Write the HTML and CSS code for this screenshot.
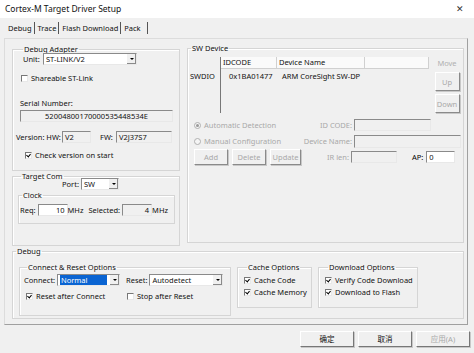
FILE: index.html
```
<!DOCTYPE html>
<html lang="en">
<head>
    <meta charset="UTF-8">
    <title>Cortex-M Target Driver Setup</title>
    <link rel="stylesheet" href="styles.css">
</head>
<body>
    <div class="titlebar">
        <span>Cortex-M Target Driver Setup</span>
        <span class="close">&#x2715;</span>
    </div>
    <div class="dialog">
        <div class="tabs">
            <span class="tab active">Debug</span>
            <span class="tab">Trace</span>
            <span class="tab">Flash Download</span>
            <span class="tab">Pack</span>
        </div>
        <div class="panel">
            <div class="top">
                <div class="left-col">
                    <fieldset class="group adapter">
                        <legend>Debug Adapter</legend>
                        <div class="row unit-row">
                            <span class="lbl">Unit:</span>
                            <div class="select w-unit"><span>ST-LINK/V2</span><i class="arrow"></i></div>
                        </div>
                        <label class="row check share-row"><span class="cb"></span>Shareable ST-Link</label>
                        <div class="row serial-lbl">Serial Number:</div>
                        <div class="box grey serial">52004800170000535448534E</div>
                        <div class="row version-row">
                            <span class="lbl">Version: HW:</span>
                            <div class="box grey hw">V2</div>
                            <span class="lbl fw-lbl">FW:</span>
                            <div class="box grey fw">V2J37S7</div>
                        </div>
                        <label class="row check ver-check"><span class="cb on"></span>Check version on start</label>
                    </fieldset>
                    <fieldset class="group target">
                        <legend>Target Com</legend>
                        <div class="row port-row">
                            <span class="lbl">Port:</span>
                            <div class="select w-port"><span>SW</span><i class="arrow"></i></div>
                        </div>
                        <fieldset class="group clock">
                            <legend>Clock</legend>
                            <div class="row req-row">
                                <span class="lbl">Req:</span>
                                <div class="box num req">10</div>
                                <span class="lbl unit-mhz">MHz</span>
                                <span class="lbl sel-lbl">Selected:</span>
                                <div class="box grey num sel">4</div>
                                <span class="lbl unit-mhz">MHz</span>
                            </div>
                        </fieldset>
                    </fieldset>
                </div>
                <fieldset class="group swdev">
                    <legend>SW Device</legend>
                    <div class="dev-top">
                        <span class="swdio">SWDIO</span>
                        <div class="devlist">
                            <div class="dev-head">
                                <span class="c1">IDCODE</span>
                                <span class="c2">Device Name</span>
                                <span class="c3"></span>
                            </div>
                            <div class="dev-row">
                                <span class="c1">0x1BA01477</span>
                                <span class="c2">ARM CoreSight SW-DP</span>
                            </div>
                        </div>
                        <div class="move-col">
                            <span class="move">Move</span>
                            <div class="btn off up">Up</div>
                            <div class="btn off down">Down</div>
                        </div>
                    </div>
                    <div class="row cfg-row">
                        <label class="radio-cell off"><span class="rb on"></span>Automatic Detection</label>
                        <span class="cfg-lbl off">ID CODE:</span>
                        <div class="box grey idcode"></div>
                    </div>
                    <div class="row cfg-row">
                        <label class="radio-cell off"><span class="rb"></span>Manual Configuration</label>
                        <span class="cfg-lbl off">Device Name:</span>
                        <div class="box grey devname"></div>
                    </div>
                    <div class="row cfg-row btn-row">
                        <div class="btn off add">Add</div>
                        <div class="btn off del">Delete</div>
                        <div class="btn off upd">Update</div>
                        <span class="cfg-lbl off irlen-lbl">IR len:</span>
                        <div class="box grey irlen"></div>
                        <span class="lbl ap-lbl">AP:</span>
                        <div class="box ap">0</div>
                    </div>
                </fieldset>
            </div>
            <fieldset class="group debug">
                <legend>Debug</legend>
                <div class="debug-row">
                    <fieldset class="group conn">
                        <legend>Connect &amp; Reset Options</legend>
                        <div class="row conn-row">
                            <span class="lbl">Connect:</span>
                            <div class="select w-conn"><span class="hl">Normal</span><i class="arrow"></i></div>
                            <span class="lbl reset-lbl">Reset:</span>
                            <div class="select w-reset"><span>Autodetect</span><i class="arrow"></i></div>
                        </div>
                        <div class="row conn-checks">
                            <label class="check rac"><span class="cb on"></span>Reset after Connect</label>
                            <label class="check"><span class="cb"></span>Stop after Reset</label>
                        </div>
                    </fieldset>
                    <fieldset class="group cache">
                        <legend>Cache Options</legend>
                        <label class="row check opt first"><span class="cb on"></span>Cache Code</label>
                        <label class="row check opt"><span class="cb on"></span>Cache Memory</label>
                    </fieldset>
                    <fieldset class="group download">
                        <legend>Download Options</legend>
                        <label class="row check opt first"><span class="cb on"></span>Verify Code Download</label>
                        <label class="row check opt"><span class="cb on"></span>Download to Flash</label>
                    </fieldset>
                </div>
            </fieldset>
        </div>
        <div class="buttons">
            <div class="btn big">确定</div>
            <div class="btn big">取消</div>
            <div class="btn big off">应用(A)</div>
        </div>
    </div>
</body>
</html>
```
FILE: styles.css
```
body {
    margin: 0;
    width: 474px;
    height: 353px;
    overflow: hidden;
    font-family: "Noto Sans", "Noto Sans CJK SC", sans-serif;
    font-size: 7.5px;
    line-height: 10px;
    color: #111;
    background: #f0f0f0;
}

.titlebar {
    height: 18px;
    background: #fff;
    display: flex;
    align-items: center;
    justify-content: space-between;
    padding: 0 10px 0 5px;
    font-size: 8.5px;
}

.close {
    font-size: 9px;
    color: #333;
}

.tabs {
    display: flex;
    align-items: center;
    height: 20px;
    padding-left: 8px;
}

.tab {
    padding: 0 2px 0 0;
    margin-right: 2px;
    border-right: 1px solid #555;
    line-height: 12px;
}

.tab + .tab {
    padding-left: 1px;
}

.tab:last-child {
    padding-right: 6px;
}

.panel {
    margin: 0 6px 0 4px;
    height: 287px;
    border: 1px solid #dcdcdc;
    border-right-color: #a0a0a0;
    border-bottom-color: #a0a0a0;
    padding: 5px 0 0 7px;
    box-sizing: border-box;
}

.top {
    display: flex;
    gap: 7px;
}

/* group boxes */
.group {
    margin: 0;
    padding: 0;
    border: 1px solid #d5d5d5;
    box-shadow: inset 1px 1px 0 #fff;
    box-sizing: border-box;
    min-width: 0;
}

.group legend {
    margin-left: 3px;
    padding: 0 1px;
    line-height: 10px;
}

.left-col {
    width: 168px;
}

.adapter {
    height: 127px;
    padding-left: 7px;
}

.target {
    height: 75px;
    padding-left: 5px;
}

.swdev {
    width: 277px;
    height: 200px;
    margin-top: -1px;
}

.row {
    display: flex;
    align-items: center;
}

.lbl {
    white-space: nowrap;
}

/* inputs */
.box {
    height: 12px;
    box-sizing: border-box;
    background: #fff;
    border: 1px solid;
    border-color: #8a8a8a #e8e8e8 #e8e8e8 #8a8a8a;
    padding: 0 2px;
    line-height: 10px;
}

.box.grey {
    background: #f0f0f0;
}

.box.num {
    text-align: right;
}

.select {
    height: 12px;
    box-sizing: border-box;
    background: #fff;
    border: 1px solid;
    border-color: #8a8a8a #e8e8e8 #e8e8e8 #8a8a8a;
    display: flex;
    align-items: center;
    justify-content: space-between;
    padding-left: 2px;
}

.select .arrow {
    width: 9px;
    height: 10px;
    background: #f0f0f0;
    border-left: 1px solid #fff;
    box-shadow: inset -1px -1px 0 #8a8a8a;
    display: flex;
    align-items: center;
    justify-content: center;
}

.select .arrow::after {
    content: "";
    border-left: 2px solid transparent;
    border-right: 2px solid transparent;
    border-top: 2px solid #000;
    margin-top: -1px;
}

.select .hl {
    background: #0a64d2;
    color: #fff;
    flex: 1;
    margin-right: 2px;
    padding-left: 1px;
    line-height: 10px;
}

/* checks and radios */
.check {
    display: flex;
    align-items: center;
    white-space: nowrap;
}

.cb {
    width: 7px;
    height: 7px;
    box-sizing: border-box;
    border: 1px solid;
    border-color: #777 #e8e8e8 #e8e8e8 #777;
    background: #fff;
    margin-right: 3px;
    position: relative;
}

.cb.on::after {
    content: "";
    position: absolute;
    left: 1px;
    top: 0;
    width: 2px;
    height: 3px;
    border-right: 1px solid #000;
    border-bottom: 1px solid #000;
    transform: rotate(40deg);
}

.rb {
    width: 7px;
    height: 7px;
    box-sizing: border-box;
    border: 1px solid #b0b0b0;
    border-radius: 50%;
    background: #f5f5f5;
    margin-right: 3px;
    display: inline-flex;
    align-items: center;
    justify-content: center;
}

.rb.on::after {
    content: "";
    width: 3px;
    height: 3px;
    border-radius: 50%;
    background: #999;
}

/* debug adapter */
.unit-row {
    height: 12px;
    margin-top: -1px;
    padding-left: 3px;
}

.unit-row .lbl {
    width: 20px;
}

.w-unit {
    width: 94px;
}

.share-row {
    margin-top: 8px;
    padding-left: 1px;
}

.serial-lbl {
    margin-top: 15px;
}

.serial {
    margin-top: 2px;
    width: 153px;
    text-align: center;
}

.version-row {
    margin-top: 9px;
    margin-left: -4px;
}

.version-row .lbl {
    width: 46px;
}

.hw {
    width: 29px;
}

.fw-lbl.lbl {
    width: auto;
    margin: 0 3px 0 9px;
}

.fw {
    width: 56px;
}

.ver-check {
    margin-top: 7px;
    padding-left: 5px;
}

/* target com */
.port-row {
    margin-top: -3px;
    padding-left: 44px;
}

.port-row .lbl {
    width: 19px;
}

.w-port {
    width: 38px;
}

.clock {
    height: 34px;
    width: 157px;
    margin-top: 0;
}

.req-row {
    margin-top: 4px;
    padding-left: 1px;
}

.req-row .lbl {
    margin-right: 2px;
}

.req {
    width: 30px;
}

.sel {
    width: 30px;
}

.sel-lbl {
    margin-left: 3px;
}

/* sw device */
.dev-top {
    display: flex;
    margin-top: 4px;
}

.swdio {
    width: 30px;
    padding-left: 2px;
    margin-top: 14px;
}

.devlist {
    width: 209px;
    height: 56px;
    border-left: 1px solid #777;
    box-sizing: border-box;
}

.dev-head {
    display: flex;
    height: 12px;
    line-height: 11px;
}

.dev-head span {
    border-right: 1px solid #d0d0d0;
    border-bottom: 1px solid #d0d0d0;
    background: #fafafa;
    padding-left: 2px;
    box-sizing: border-box;
}

.c1 {
    width: 56px;
}

.c2 {
    width: 88px;
}

.c3 {
    width: 64px;
}

.dev-row {
    display: flex;
    margin-top: 2px;
}

.dev-row .c1 {
    padding-left: 8px;
    box-sizing: border-box;
}

.dev-row .c2 {
    padding-left: 5px;
}

.move-col {
    width: 26px;
    margin-left: 5px;
    display: flex;
    flex-direction: column;
    align-items: center;
}

.move {
    color: #b0b0b0;
    margin-top: 1px;
}

.btn {
    box-sizing: border-box;
    border: 1px solid;
    border-color: #fff #8a8a8a #8a8a8a #fff;
    box-shadow: 1px 1px 0 #c8c8c8;
    display: flex;
    align-items: center;
    justify-content: center;
    background: #f0f0f0;
}

.btn.off {
    color: #a8a8a8;
}

.up, .down {
    width: 25px;
    height: 19px;
}

.up {
    margin-top: 4px;
}

.down {
    margin-top: 3px;
}

.cfg-row {
    padding-left: 6px;
    height: 12px;
}

.cfg-row + .cfg-row {
    margin-top: 4px;
}

.dev-top + .cfg-row {
    margin-top: 6px;
}

.off {
    color: #a8a8a8;
}

.radio-cell {
    display: flex;
    align-items: center;
    width: 108px;
    white-space: nowrap;
}

.cfg-lbl {
    width: 50px;
    text-align: right;
    margin-right: 2px;
    white-space: nowrap;
}

.idcode {
    width: 77px;
}

.devname {
    width: 107px;
    height: 13px;
}

.btn-row {
    height: 16px;
}

.cfg-row.btn-row {
    margin-top: 2px;
}

.add, .del {
    width: 34px;
    height: 16px;
    margin-right: 4px;
}

.upd {
    width: 31px;
    height: 16px;
}

.irlen-lbl {
    width: 48px;
}

.irlen {
    width: 46px;
}

.ap-lbl {
    margin: 0 3px 0 15px;
    color: #000;
}

.ap {
    width: 29px;
}

/* debug */
.debug {
    width: 452px;
    height: 73px;
}

.debug-row {
    display: flex;
    align-items: flex-start;
    margin-top: 6px;
    padding-left: 6px;
    gap: 6px;
}

.conn {
    width: 212px;
    height: 54px;
    padding-left: 4px;
}

.conn-row {
    margin-top: 2px;
}

.conn-row .lbl {
    width: 33px;
}

.w-conn {
    width: 63px;
}

.lbl.reset-lbl {
    width: auto;
    margin: 0 2px 0 6px;
}

.w-reset {
    width: 74px;
}

.conn-checks {
    margin-top: 5px;
    padding-left: 2px;
}

.rac {
    width: 101px;
}

.cache {
    width: 75px;
    height: 46px;
    padding-left: 6px;
}

.download {
    width: 100px;
    height: 46px;
    padding-left: 6px;
}

.opt.first {
    margin-top: 3px;
}

.opt {
    margin-top: 2px;
}

/* bottom buttons */
.buttons {
    display: flex;
    justify-content: flex-end;
    gap: 4px;
    margin: 6px 4px 0 0;
}

.btn.big {
    width: 54px;
    height: 16px;
    border-color: #fff #777 #777 #fff;
}
```
